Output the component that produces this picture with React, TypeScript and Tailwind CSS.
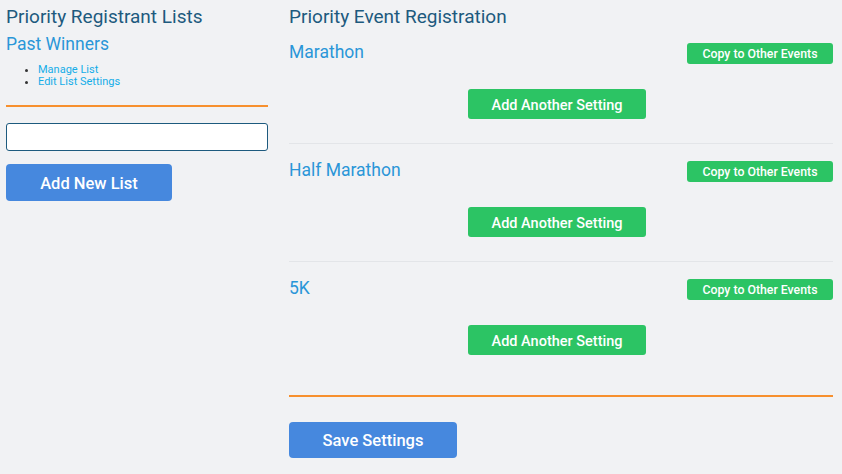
import React from "react";

const events = ["Marathon", "Half Marathon", "5K"];

export default function App() {
  return (
    <div
      className="w-[842px] h-[474px] bg-[#f1f2f4] flex overflow-hidden"
      style={{ fontFamily: "Roboto, 'Liberation Sans', sans-serif" }}
    >
      {/* Left column */}
      <div className="w-[262px] ml-[6px] pt-[5px] flex flex-col">
        <h1 className="text-[19px] leading-[24px] text-[#1d5a7e] font-normal">
          Priority Registrant Lists
        </h1>
        <h2 className="mt-[5px] text-[17.5px] leading-[20px] text-[#2a96d8] font-normal">
          Past Winners
        </h2>
        <ul className="mt-[10px] pl-[32px] list-disc text-[11px] leading-[12px] text-[#14ade8] marker:text-[#333]">
          <li>Manage List</li>
          <li>Edit List Settings</li>
        </ul>
        <div className="mt-[17px] h-[2px] bg-[#f7902e]" />
        <input
          type="text"
          className="mt-[16px] h-[28px] bg-white border border-[#1d5a7e] rounded-[3px] outline-none"
        />
        <button className="mt-[13px] w-[166px] h-[37px] pt-[3px] rounded-[4px] bg-[#4688de] text-white text-[16.5px] font-medium">
          Add New List
        </button>
      </div>

      {/* Right column */}
      <div className="w-[544px] ml-[21px] pt-[5px] flex flex-col">
        <h1 className="text-[19px] leading-[24px] text-[#1d5a7e] font-normal">
          Priority Event Registration
        </h1>
        <div className="mt-[13px] flex flex-col">
          {events.map((ev, i) => (
            <div key={ev} className="flex flex-col">
              <div className="flex justify-between items-start h-[22px]">
                <span className="text-[17.5px] leading-[20px] text-[#2a96d8]">{ev}</span>
                <button className="mt-[1px] w-[146px] h-[21px] pt-[2px] rounded-[3px] bg-[#2cc464] text-white text-[12.3px] font-medium leading-[19px]">
                  Copy to Other Events
                </button>
              </div>
              <div className="mt-[25px] w-[536px] flex justify-center">
                <button className="w-[178px] h-[30px] pt-[3px] rounded-[3px] bg-[#2cc464] text-white text-[14.5px] font-medium">
                  Add Another Setting
                </button>
              </div>
              {i < events.length - 1 && (
                <div className="mt-[24px] mb-[16px] h-[1px] bg-[#e3e5e8]" />
              )}
            </div>
          ))}
        </div>
        <div className="mt-[40px] h-[2px] bg-[#f7902e]" />
        <button className="mt-[25px] w-[168px] h-[36px] pt-[3px] rounded-[4px] bg-[#4688de] text-white text-[16.5px] font-medium">
          Save Settings
        </button>
      </div>
    </div>
  );
}
